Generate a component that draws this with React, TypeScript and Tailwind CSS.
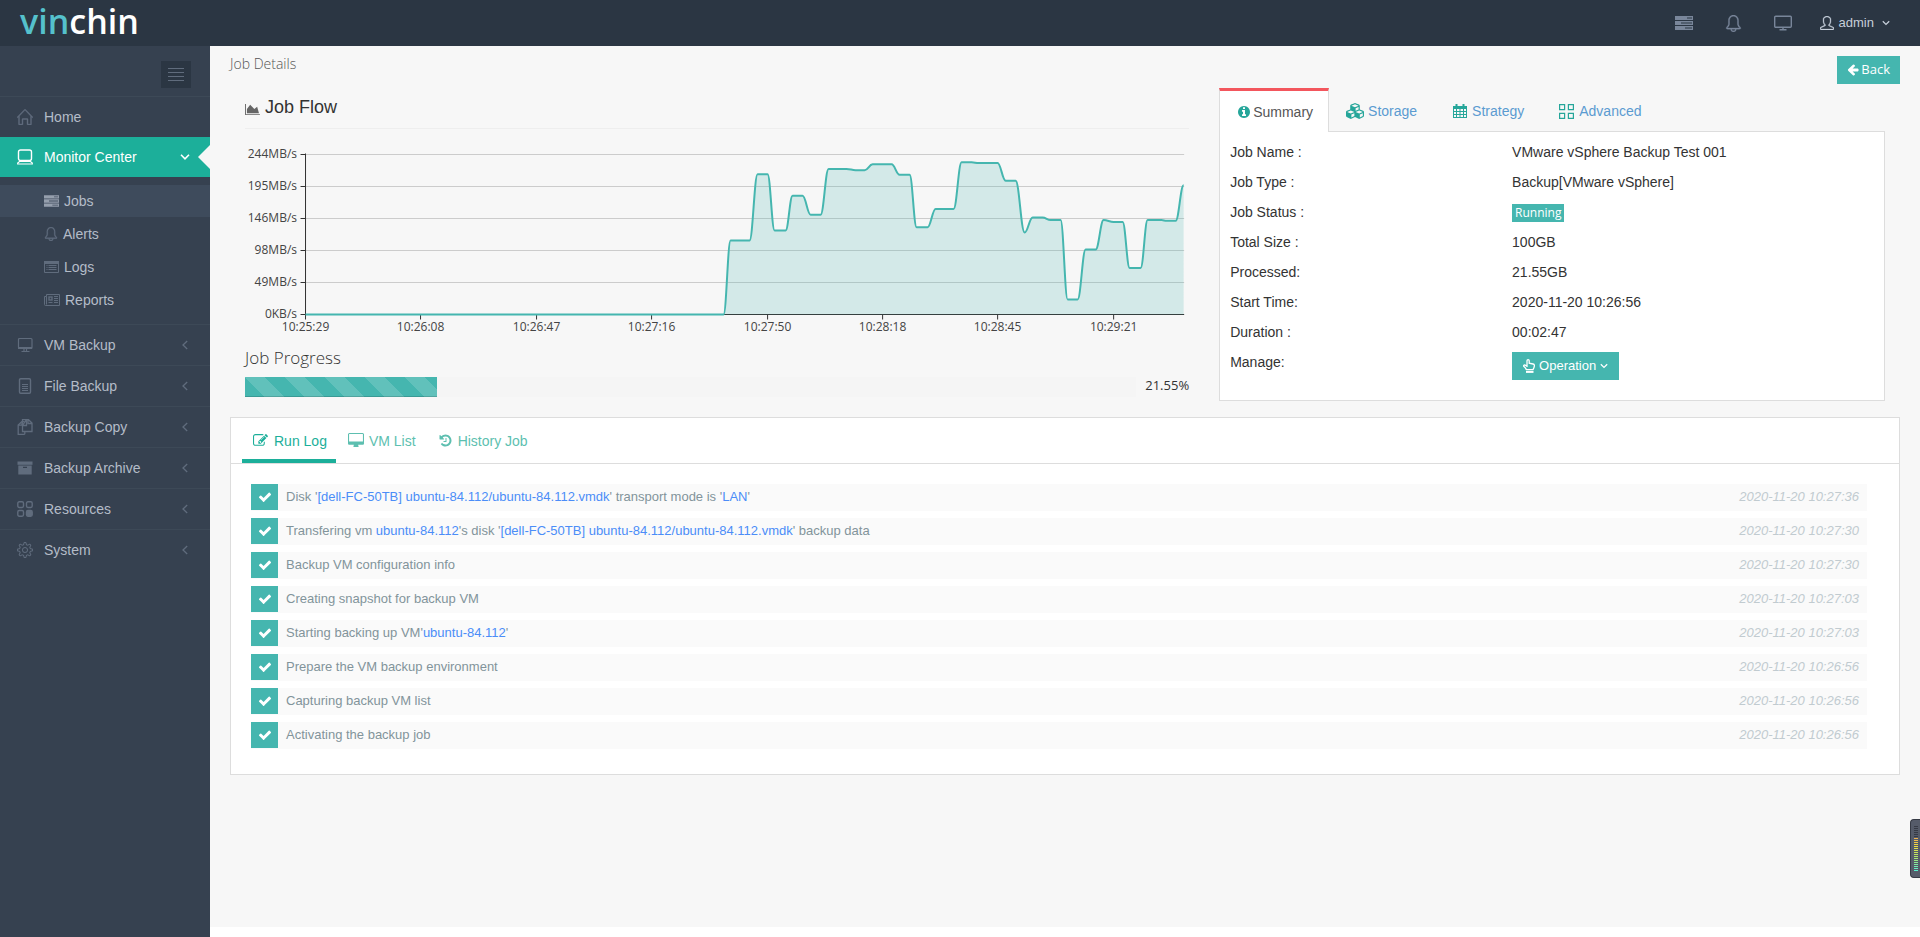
import type { ReactNode } from 'react';
import { FaCubes } from 'react-icons/fa';
import { SlBell, SlHome, SlSettings, SlUser } from 'react-icons/sl';

interface IconProps {
  className?: string;
}

function LaptopIcon({ className }: IconProps) {
  return (
    <svg viewBox="0 0 16 16" className={className} fill="none" stroke="currentColor">
      <rect x="1.5" y="1" width="13" height="10.5" rx="2" strokeWidth="1.4" />
      <path d="M2.5 12.5h11l1.8 1.5v1H.7v-1z" strokeWidth="1.2" />
    </svg>
  );
}

function ServerIcon({ className }: IconProps) {
  return (
    <svg viewBox="0 0 18 14" className={className} fill="currentColor" fillRule="evenodd">
      <path d="M0 0h18v4H0zM12 1.5v1h5v-1z" />
      <path d="M0 5h18v4H0zM6 6.5v1h11v-1z" />
      <path d="M0 10h18v4H0zM10 11.5v1h7v-1z" />
    </svg>
  );
}

function LogsIcon({ className }: IconProps) {
  return (
    <svg viewBox="0 0 15 12" className={className} fill="currentColor">
      <path d="M0 0h15v3H0z" />
      <path d="M.5 2v9.5h14V2" fill="none" stroke="currentColor" />
      <path d="M2.5 4h1v1h-1zM4.5 4h8v1h-8zM2.5 6h1v1h-1zM4.5 6h8v1h-8zM2.5 8h1v1h-1zM4.5 8h8v1h-8z" />
    </svg>
  );
}

function ReportsIcon({ className }: IconProps) {
  return (
    <svg viewBox="0 0 16 12" className={className} fill="none" stroke="currentColor">
      <path d="M2.5.5h13v11h-14q-1 0-1-1v-8h2zM2.5 2.5v8" />
      <rect x="5" y="3" width="3" height="3" strokeWidth="1.4" />
      <path d="M10 2.5h4M10 4.5h4M10 6.5h4M4.5 8.5h4M10 8.5h4" />
    </svg>
  );
}

function ScreenIcon({ className }: IconProps) {
  return (
    <svg viewBox="0 0 18 16" className={className} fill="none" stroke="currentColor">
      <rect x=".7" y="1.2" width="16.6" height="11" rx="1" strokeWidth="1.4" />
      <path d="M9 12v2.5M5.5 14.7h7" strokeWidth="1.4" />
    </svg>
  );
}

function VmIcon({ className }: IconProps) {
  return (
    <svg viewBox="0 0 16 16" className={className} fill="none" stroke="currentColor">
      <rect x="1.5" y="1.5" width="13.5" height="10" rx="1" strokeWidth="1.2" />
      <path d="M1 10.500h14M1 11.500h14M7 12v2.500M9.500 12v2.500M4.500 14.500h8" strokeWidth="1.2" />
    </svg>
  );
}

function FileIcon({ className }: IconProps) {
  return (
    <svg viewBox="0 0 16 16" className={className} fill="none" stroke="currentColor">
      <rect x="2.5" y=".7" width="11" height="14.600" rx="1.2" strokeWidth="1.4" />
      <path d="M5 6.500h6M5 8.500h6M5 10.500h6M5 12.500h6" />
    </svg>
  );
}

function CopyIcon({ className }: IconProps) {
  return (
    <svg viewBox="0 0 16 16" className={className} fill="none" stroke="currentColor" strokeWidth="1.3">
      <path d="M7.800 15.300H1.200V6L4.800 2.700h2.800" />
      <path d="M1.200 6.200H5V2.700M7.800 15.300V12.600" />
      <path d="M5.500 6.500 9.500.7h2L15 4v8.500H5.500V.7h4M5.500 6.500H9.500V.7M11 .7v3.800h4" />
    </svg>
  );
}

function ArchiveIcon({ className }: IconProps) {
  return (
    <svg viewBox="0 0 16 16" className={className} fill="currentColor" fillRule="evenodd">
      <path d="M.5 1.5h15v3.300H.5z" />
      <path d="M1.300 5.400h13.400v9.100H1.300zM6 6.800v1.100h4V6.800z" />
    </svg>
  );
}

function ResourcesIcon({ className }: IconProps) {
  return (
    <svg viewBox="0 0 16 16" className={className} fill="none" stroke="currentColor" strokeWidth="1.4">
      <rect x=".8" y=".8" width="5.700" height="5.700" rx="1.4" />
      <rect x="9.500" y=".8" width="5.700" height="5.700" rx="1.4" />
      <rect x=".8" y="9.500" width="5.700" height="5.700" rx="1.4" />
      <rect x="9.500" y="9.500" width="5.700" height="5.700" rx="1.4" fill="currentColor" />
    </svg>
  );
}

function AngleDown({ className }: IconProps) {
  return (
    <svg viewBox="0 0 10 6" className={className} fill="none" stroke="currentColor" strokeWidth="1.6">
      <path d="M1 .8 5 4.800 9 .8" />
    </svg>
  );
}

function AngleLeft({ className }: IconProps) {
  return (
    <svg viewBox="0 0 6 10" className={className} fill="none" stroke="currentColor" strokeWidth="1.3">
      <path d="M5.200 1 1 5l4.200 4" />
    </svg>
  );
}

function AreaChartIcon({ className }: IconProps) {
  return (
    <svg viewBox="0 0 2048 1792" className={className} fill="currentColor">
      <path d="M2048 1536v128h-2048v-1536h128v1408h1920zm-384-1024l256 896h-1664v-576l448-576 576 576z" />
    </svg>
  );
}

function InfoIcon({ className }: IconProps) {
  return (
    <svg viewBox="128 128 1536 1536" className={className} fill="currentColor">
      <path d="M1152 1376v-160q0-14-9-23t-23-9h-96v-512q0-14-9-23t-23-9h-320q-14 0-23 9t-9 23v160q0 14 9 23t23 9h96v320h-96q-14 0-23 9t-9 23v160q0 14 9 23t23 9h448q14 0 23-9t9-23zm-128-896v-160q0-14-9-23t-23-9h-192q-14 0-23 9t-9 23v160q0 14 9 23t23 9h192q14 0 23-9t9-23zm640 416q0 209-103 385.500t-279.500 279.500-385.500 103-385.500-103-279.500-279.500-103-385.500 103-385.500 279.500-279.500 385.500-103 385.500 103 279.500 279.500 103 385.500z" />
    </svg>
  );
}

function CalendarIcon({ className }: IconProps) {
  return (
    <svg viewBox="0 0 14 14" className={className} fill="currentColor" fillRule="evenodd">
      <path d="M0 2h14v12H0zM1 5v2h2V5zM4 5v2h2.500V5zM7.500 5v2H10V5zM11 5v2h2V5zM1 8v2h2V8zM4 8v2h2.500V8zM7.500 8v2H10V8zM11 8v2h2V8zM1 11v2h2v-2zM4 11v2h2.500v-2zM7.500 11v2H10v-2zM11 11v2h2v-2z" />
      <path d="M2.500 0h2v3.500h-2zM9.500 0h2v3.500h-2z" />
    </svg>
  );
}

function GridIcon({ className }: IconProps) {
  return (
    <svg viewBox="0 0 15 15" className={className} fill="none" stroke="currentColor" strokeWidth="1.2">
      <path d="M.6.600h5v5h-5zM9.400.600h5v5h-5zM.6 9.400h5v5h-5zM9.400 9.400h5v5h-5z" />
    </svg>
  );
}

function EditIcon({ className }: IconProps) {
  return (
    <svg viewBox="0 0 1792 1792" className={className} fill="currentColor">
      <path d="M888 1184l116-116-152-152-116 116v56h96v96h56zm440-720q-16-16-33 1l-350 350q-17 17-1 33t33-1l350-350q17-17 1-33zm80 594v190q0 119-84.500 203.500t-203.500 84.500h-832q-119 0-203.500-84.500t-84.500-203.500v-832q0-119 84.500-203.500t203.500-84.500h832q63 0 117 25 15 7 18 23 3 17-9 29l-49 49q-14 14-32 8-23-6-45-6h-832q-66 0-113 47t-47 113v832q0 66 47 113t113 47h832q66 0 113-47t47-113v-126q0-13 9-22l64-64q15-15 35-7t20 29zm-96-738l288 288-672 672h-288v-288zm444 132l-92 92-288-288 92-92q28-28 68-28t68 28l152 152q28 28 28 68t-28 68z" />
    </svg>
  );
}

function DesktopIcon({ className }: IconProps) {
  return (
    <svg viewBox="-64 0 1920 1792" className={className} fill="currentColor">
      <path d="M1728 992v-832q0-13-9.500-22.500t-22.500-9.500h-1600q-13 0-22.500 9.500t-9.500 22.500v832q0 13 9.500 22.500t22.500 9.500h1600q13 0 22.500-9.500t9.500-22.500zm128-832v1088q0 66-47 113t-113 47h-544q0 37 16 77.500t32 71 16 43.500q0 26-19 45t-45 19h-512q-26 0-45-19t-19-45q0-14 16-44t32-70 16-78h-544q-66 0-113-47t-47-113v-1088q0-66 47-113t113-47h1600q66 0 113 47t47 113z" />
    </svg>
  );
}

function HistoryIcon({ className }: IconProps) {
  return (
    <svg viewBox="64 64 1664 1664" className={className} fill="currentColor">
      <path d="M1664 896q0 156-61 298t-164 245-245 164-298 61q-172 0-327-72.500t-264-204.500q-7-10-6.500-22.500t8.500-20.500l137-138q10-9 25-9 16 2 23 12 73 95 179 147t225 52q104 0 198.500-40.500t163.500-109.500 109.500-163.500 40.500-198.500-40.500-198.500-109.500-163.500-163.500-109.500-198.500-40.500q-98 0-188 35.500t-160 101.500l137 138q31 30 14 69-17 40-59 40h-448q-26 0-45-19t-19-45v-448q0-42 40-59 39-17 69 14l130 129q107-101 244.500-156.500t284.500-55.500q156 0 298 61t245 164 164 245 61 298zm-640-288v448q0 14-9 23t-23 9h-320q-14 0-23-9t-9-23v-64q0-14 9-23t23-9h224v-352q0-14 9-23t23-9h64q14 0 23 9t9 23z" />
    </svg>
  );
}

function CheckIcon({ className }: IconProps) {
  return (
    <svg viewBox="0 0 1792 1792" className={className} fill="currentColor">
      <path d="M1671 566q0 40-28 68l-724 724-136 136q-28 28-68 28t-68-28l-136-136-362-362q-28-28-28-68t28-68l136-136q28-28 68-28t68 28l294 295 656-657q28-28 68-28t68 28l136 136q28 28 28 68z" />
    </svg>
  );
}

function ArrowLeftIcon({ className }: IconProps) {
  return (
    <svg viewBox="64 128 1664 1664" className={className} fill="currentColor">
      <path d="M1664 896v128q0 53-32.500 90.500t-84.500 37.500h-704l293 294q38 36 38 90t-38 90l-75 76q-37 37-90 37-52 0-91-37l-651-652q-37-37-37-90 0-52 37-91l651-650q38-38 91-38 52 0 90 38l75 74q38 38 38 91t-38 91l-293 293h704q52 0 84.500 37.500t32.500 90.500z" />
    </svg>
  );
}

function HandIcon({ className }: IconProps) {
  return (
    <svg viewBox="0 0 12 14" className={className} fill="none" stroke="currentColor" strokeWidth="1.3">
      <path d="M4 8V1.800a1.100 1.100 0 0 1 2.200 0V4.200l3.800.8q1.400.3 1.400 1.600 0 1.600-1.400 4H3.400Q2.600 8.900.7 7.300q-.4-1.300 1-1.300L4 7.200" />
      <path d="M3 12.900h7.500" strokeWidth="2" />
    </svg>
  );
}

const mainMenu = [
  { label: 'VM Backup', Icon: VmIcon },
  { label: 'File Backup', Icon: FileIcon },
  { label: 'Backup Copy', Icon: CopyIcon },
  { label: 'Backup Archive', Icon: ArchiveIcon },
  { label: 'Resources', Icon: ResourcesIcon },
  { label: 'System', Icon: SlSettings },
];

const subMenu = [
  { label: 'Jobs', Icon: ServerIcon, size: 'w-[15px] h-3', active: true },
  { label: 'Alerts', Icon: SlBell, size: 'w-[14px] h-[14px] stroke-[24px]', active: false },
  { label: 'Logs', Icon: LogsIcon, size: 'w-[15px] h-3', active: false },
  { label: 'Reports', Icon: ReportsIcon, size: 'w-4 h-3', active: false },
];

const summary: { label: string; value: ReactNode }[] = [
  { label: 'Job Name :', value: 'VMware vSphere Backup Test 001' },
  { label: 'Job Type :', value: 'Backup[VMware vSphere]' },
  {
    label: 'Job Status :',
    value: (
      <span className="inline-block bg-[#45b6af] px-[3px] font-['Open_Sans',sans-serif] text-xs leading-[18px] text-white">
        Running
      </span>
    ),
  },
  { label: 'Total Size :', value: '100GB' },
  { label: 'Processed:', value: '21.55GB' },
  { label: 'Start Time:', value: '2020-11-20 10:26:56' },
  { label: 'Duration :', value: '00:02:47' },
];

function Hl({ children }: { children: ReactNode }) {
  return <span className="text-[#4b8df8]">{children}</span>;
}

const logs: { text: ReactNode; time: string }[] = [
  {
    text: (
      <>
        Disk '<Hl>[dell-FC-50TB] ubuntu-84.112/ubuntu-84.112.vmdk</Hl>' transport mode is '<Hl>LAN</Hl>'
      </>
    ),
    time: '2020-11-20 10:27:36',
  },
  {
    text: (
      <>
        Transfering vm <Hl>ubuntu-84.112</Hl>'s disk '
        <Hl>[dell-FC-50TB] ubuntu-84.112/ubuntu-84.112.vmdk</Hl>' backup data
      </>
    ),
    time: '2020-11-20 10:27:30',
  },
  { text: 'Backup VM configuration info', time: '2020-11-20 10:27:30' },
  { text: 'Creating snapshot for backup VM', time: '2020-11-20 10:27:03' },
  {
    text: (
      <>
        Starting backing up VM'<Hl>ubuntu-84.112</Hl>'
      </>
    ),
    time: '2020-11-20 10:27:03',
  },
  { text: 'Prepare the VM backup environment', time: '2020-11-20 10:26:56' },
  { text: 'Capturing backup VM list', time: '2020-11-20 10:26:56' },
  { text: 'Activating the backup job', time: '2020-11-20 10:26:56' },
];

// plot area inside the chart's own coordinates
const PLOT = { left: 60.5, right: 939, top: 25.5, bottom: 185.5 };
const MAX_RATE = 244;

const yTicks = ['244MB/s', '195MB/s', '146MB/s', '98MB/s', '49MB/s', '0KB/s'];
const xTicks = [
  '10:25:29',
  '10:26:08',
  '10:26:47',
  '10:27:16',
  '10:27:50',
  '10:28:18',
  '10:28:45',
  '10:29:21',
];

// [offset on the time axis, MB/s]
const flow: [number, number][] = [
  [0, 0], [418, 0], [425, 113], [444, 113], [452, 214], [462, 214], [469, 128], [480, 128],
  [487, 181], [497, 181], [505, 152], [515, 152], [523, 222], [541, 222], [550, 220], [559, 220],
  [567, 229], [586, 229], [594, 213], [604, 213], [611, 133], [622, 133], [630, 161], [648, 161],
  [656, 232], [666, 232], [673, 231], [692, 231], [700, 204], [710, 204], [719, 125], [727, 148],
  [737, 148], [745, 144], [755, 144], [762, 23], [772, 23], [780, 99], [790, 99], [798, 144],
  [808, 141], [817, 141], [824, 71], [835, 71], [842, 144], [856, 144], [861, 143], [870, 143],
  [878, 197],
];

function linePath() {
  const pts = flow.map(([x, rate]) => [
    PLOT.left + x,
    PLOT.bottom - (rate / MAX_RATE) * (PLOT.bottom - PLOT.top),
  ]);
  return pts.reduce((d, [x, y], i) => {
    if (i === 0) return `M${x} ${y}`;
    const [px, py] = pts[i - 1];
    const k = (x - px) * 0.4;
    return `${d}C${px + k} ${py} ${x - k} ${y} ${x} ${y}`;
  }, '');
}

function FlowChart() {
  const line = linePath();
  return (
    <svg
      viewBox="0 0 944 214"
      className="block w-full font-['Open_Sans',sans-serif] text-xs"
      role="img"
      aria-label="Job Flow"
    >
      {yTicks.map((label, i) => {
        const y = PLOT.top + i * 32;
        return (
          <g key={label}>
            {i < 5 && <path d={`M${PLOT.left} ${y}H${PLOT.right}`} stroke="#ccc" />}
            <path d={`M${PLOT.left - 5} ${y}h5`} stroke="#333" />
            <text x="52" y={y + 3} textAnchor="end" fill="#444">
              {label}
            </text>
          </g>
        );
      })}
      <path d={`M${PLOT.left} ${PLOT.top - 1}V${PLOT.bottom}H${PLOT.right}`} fill="none" stroke="#333" />
      {xTicks.map((label, i) => {
        const x = Math.floor(PLOT.left + i * 115.4) + 0.5;
        return (
          <g key={label}>
            <path d={`M${x} ${PLOT.bottom}v5`} stroke="#333" />
            <text x={x} y="202" textAnchor="middle" fill="#444">
              {label}
            </text>
          </g>
        );
      })}
      <path d={`${line}V${PLOT.bottom}H${PLOT.left}Z`} fill="#45b6af" fillOpacity="0.2" />
      <path d={line} fill="none" stroke="#45b6af" strokeWidth="2" />
    </svg>
  );
}

function TopBar() {
  return (
    <header className="flex h-[46px] shrink-0 items-center justify-between bg-[#2b3643] pl-5 pr-[30px]">
      <a
        href="#"
        className="pb-1 font-['Open_Sans',sans-serif] text-[34px] font-semibold leading-8 text-white"
      >
        <span className="text-[#55c1cc]">vin</span>chin
      </a>
      <div className="flex items-center text-[#79869a]">
        <button type="button" aria-label="Tasks" className="mr-8">
          <ServerIcon className="h-[14px] w-[18px]" />
        </button>
        <button type="button" aria-label="Alerts" className="mr-8">
          <SlBell className="h-[17px] w-[17px] stroke-[20px]" />
        </button>
        <button type="button" aria-label="Console" className="mr-7">
          <ScreenIcon className="h-4 w-[18px]" />
        </button>
        <button type="button" className="flex items-center text-[13px] text-[#c6cfda]">
          <SlUser className="mr-[5px] h-[14px] w-[14px] stroke-[24px]" />
          admin
          <AngleDown className="ml-2 h-[6px] w-2" />
        </button>
      </div>
    </header>
  );
}

function Sidebar() {
  return (
    <nav className="w-[210px] shrink-0 bg-[#364150] text-sm text-[#b4bcc8]">
      <div className="flex h-[50px] justify-end pr-[19px] pt-[15px]">
        <button
          type="button"
          aria-label="Toggle menu"
          className="flex h-[27px] w-[30px] flex-col items-center justify-center gap-[3px] bg-[#2b3643]"
        >
          <span className="h-px w-4 bg-[#606c7d]" />
          <span className="h-px w-4 bg-[#606c7d]" />
          <span className="h-px w-4 bg-[#606c7d]" />
          <span className="h-px w-4 bg-[#606c7d]" />
        </button>
      </div>
      <a href="#" className="flex h-[41px] items-center border-t border-[#3d4957] pl-[17px]">
        <SlHome className="mr-[11px] h-4 w-4 stroke-[24px] text-[#606c7d]" />
        Home
      </a>
      <a href="#" className="relative flex h-10 items-center bg-[#1caf9a] pl-[17px] text-white">
        <LaptopIcon className="mr-[11px] h-4 w-4" />
        Monitor Center
        <AngleDown className="ml-auto mr-5 h-[6px] w-[10px]" />
        <span className="absolute right-0 top-2 border-y-[12px] border-r-[12px] border-y-transparent border-r-[#f7f7f7]" />
      </a>
      <ul className="pb-[7px] pt-2">
        {subMenu.map(({ label, Icon, size, active }) => (
          <li key={label} className="mb-px">
            <a
              href="#"
              className={`flex h-8 items-center gap-[5px] pl-11 ${active ? 'bg-[#3e4b5c]' : ''}`}
            >
              <Icon className={`${size} ${active ? 'text-[#959fad]' : 'text-[#606c7d]'}`} />
              {label}
            </a>
          </li>
        ))}
      </ul>
      <ul>
        {mainMenu.map(({ label, Icon }) => (
          <li key={label}>
            <a
              href="#"
              className="flex h-[41px] items-center border-t border-[#3d4957] pl-[17px] pr-[22px]"
            >
              <Icon className="mr-[11px] h-4 w-4 text-[#606c7d]" />
              {label}
              <AngleLeft className="ml-auto h-[10px] w-[6px] text-[#606c7d]" />
            </a>
          </li>
        ))}
      </ul>
    </nav>
  );
}

function FlowPanel() {
  return (
    <section className="px-[15px]">
      <h2 className="flex h-[41px] items-center border-b border-[#eee] pb-[2px] text-lg text-[#333]">
        <AreaChartIcon className="mr-[5px] mt-1 h-[13px] w-[15px] text-[#666]" />
        Job Flow
      </h2>
      <FlowChart />
      <h2 className="mb-1 font-['Open_Sans',sans-serif] text-[17px] font-light leading-[30px] text-[#333]">
        Job Progress
      </h2>
      <div className="flex items-start gap-[9px]">
        <div
          role="progressbar"
          aria-label="Job Progress"
          aria-valuenow={21.55}
          aria-valuemin={0}
          aria-valuemax={100}
          className="h-5 flex-1 bg-[#f5f5f5]"
        >
          <div
            className="h-full bg-[#45b6af] bg-[linear-gradient(45deg,rgba(255,255,255,0.15)_25%,transparent_25%,transparent_50%,rgba(255,255,255,0.15)_50%,rgba(255,255,255,0.15)_75%,transparent_75%,transparent)] bg-[length:40px_40px] shadow-[inset_0_-1px_0_rgba(0,0,0,0.15)]"
            style={{ width: '21.55%' }}
          />
        </div>
        <span className="font-['Open_Sans',sans-serif] text-[13px] leading-4 text-[#333]">21.55%</span>
      </div>
    </section>
  );
}

function SummaryPanel() {
  return (
    <section className="flex flex-col px-[15px] text-sm">
      <div className="flex h-[43px] text-[#5b9bd1]">
        <button
          type="button"
          className="relative z-10 -mb-px flex items-center gap-[3px] border-x border-t-[3px] border-x-[#ddd] border-t-[#f3565d] bg-white pl-[18px] pr-[15px] text-[#555]"
        >
          <InfoIcon className="h-3 w-3 text-[#26a69a]" />
          Summary
        </button>
        <button type="button" className="flex items-center gap-1 pl-[17px] pr-[18px] pt-[3px]">
          <FaCubes className="h-[18px] w-[18px] text-[#26a69a]" />
          Storage
        </button>
        <button type="button" className="flex items-center gap-[5px] px-[18px] pt-[3px]">
          <CalendarIcon className="h-[14px] w-[14px] text-[#26a69a]" />
          Strategy
        </button>
        <button type="button" className="flex items-center gap-[5px] px-[17px] pt-[3px]">
          <GridIcon className="h-[15px] w-[15px] text-[#26a69a]" />
          Advanced
        </button>
      </div>
      <dl className="grow border border-[#ddd] bg-white px-[10px] pb-[19px] pt-[5px] leading-[30px] text-[#333]">
        {summary.map(({ label, value }) => (
          <div key={label} className="grid h-[30px] grid-cols-[5fr_7fr] pr-2">
            <dt>{label}</dt>
            <dd className="pl-[17px]">{value}</dd>
          </div>
        ))}
        <div className="grid h-[34px] grid-cols-[5fr_7fr] pr-2">
          <dt>Manage:</dt>
          <dd className="flex pl-[17px] pt-[5px]">
            <button
              type="button"
              className="flex h-7 items-center bg-[#45b6af] px-[11px] text-[13px] text-white"
            >
              <HandIcon className="mr-1 h-[14px] w-3" />
              Operation
              <AngleDown className="ml-1 h-[6px] w-2" />
            </button>
          </dd>
        </div>
      </dl>
    </section>
  );
}

function LogPanel() {
  return (
    <section className="border border-[#ddd] bg-white">
      <div className="flex h-[46px] border-b border-[#ddd] pl-[11px] text-sm text-[#5dbfb0]">
        <button
          type="button"
          className="flex items-center gap-[6px] border-b-4 border-[#1caf9a] pl-[11px] pr-[9px] pt-1 text-[#1caf9a]"
        >
          <EditIcon className="h-[15px] w-[15px]" />
          Run Log
        </button>
        <button type="button" className="flex items-center gap-[5px] px-3">
          <DesktopIcon className="h-[15px] w-4" />
          VM List
        </button>
        <button type="button" className="flex items-center gap-[6px] px-[11px]">
          <HistoryIcon className="h-[13px] w-[13px]" />
          History Job
        </button>
      </div>
      <ul className="flex flex-col gap-[7px] pb-[25px] pl-5 pr-8 pt-5 text-[13px] leading-[25px] text-[#82949a]">
        {logs.map(({ text, time }, i) => (
          <li key={i} className="flex h-[27px] items-start bg-[#fafafa] pr-2">
            <span className="mr-2 flex h-[26px] w-[27px] items-center justify-center bg-[#45b6af] text-white">
              <CheckIcon className="h-[14px] w-[14px]" />
            </span>
            <span className="grow">{text}</span>
            <time className="italic text-[#c1cbd0]">{time}</time>
          </li>
        ))}
      </ul>
    </section>
  );
}

// load meter docked on the right edge of the window
function LoadMeter() {
  return (
    <div className="absolute right-0 top-[819px] h-[59px] w-[10px] rounded-l border border-r-0 border-[#363a45] bg-[#555b69] pl-[3px] pt-[6px]">
      <div className="h-[46px] w-1 bg-[repeating-linear-gradient(to_bottom,transparent_0_1px,#555b69_1px_2px),linear-gradient(to_bottom,#363a45_0_11px,#f0b050_12px,#f0e040_20px,#a8e870_32px,#50f0d8_46px)]" />
    </div>
  );
}

export default function App() {
  return (
    <div className="relative flex min-h-screen flex-col bg-white font-['Liberation_Sans',Arial,sans-serif]">
      <TopBar />
      <div className="flex grow">
        <Sidebar />
        <div className="flex min-w-0 grow flex-col">
          <main className="grow bg-[#f7f7f7] px-5 pb-5 pt-[10px]">
            <div className="mb-1 flex h-7 items-start justify-between">
              <h1 className="font-['Open_Sans',sans-serif] text-sm font-light leading-4 text-[#555]">
                Job Details
              </h1>
              <button
                type="button"
                className="flex h-7 items-center gap-[2px] bg-[#45b6af] px-[10px] font-['Open_Sans',sans-serif] text-[13px] text-white"
              >
                <ArrowLeftIcon className="h-3 w-3" />
                Back
              </button>
            </div>
            <div className="mb-4 grid grid-cols-[7fr_5fr]">
              <FlowPanel />
              <SummaryPanel />
            </div>
            <LogPanel />
          </main>
          <div className="h-[10px]" />
        </div>
      </div>
      <LoadMeter />
    </div>
  );
}
